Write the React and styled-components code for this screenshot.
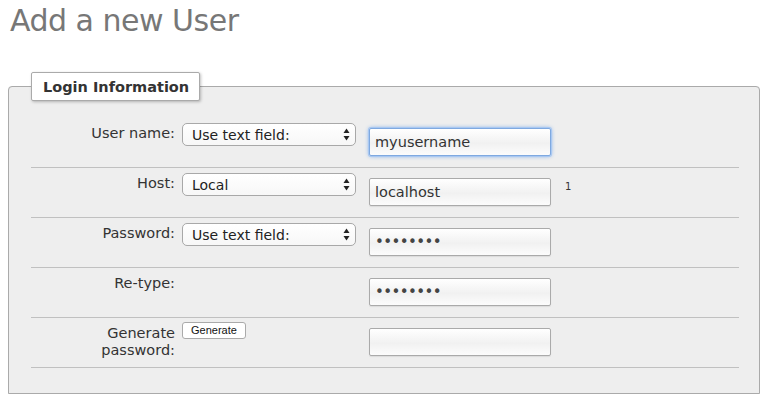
import React from "react"
import styled, { createGlobalStyle } from "styled-components"

const GlobalStyle = createGlobalStyle`
  html, body {
    margin: 0;
    padding: 0;
    background: #fff;
  }
  body {
    font-family: "DejaVu Sans", Verdana, sans-serif;
    color: #333;
  }
`

const Page = styled.div`
  padding: 3px 10px 0 8px;
`

const Title = styled.h2`
  margin: 0 0 34px 2px;
  font-size: 30px;
  font-weight: normal;
  line-height: 35px;
  letter-spacing: -0.5px;
  color: #777;
`

const Fieldset = styled.fieldset`
  margin: 0;
  padding: 17px 20px 25px 22px;
  border: 1px solid #aaa;
  border-radius: 4px 4px 0 0;
  background: #eee;
  min-width: 0;
`

const Legend = styled.legend`
  padding: 6px 10px 5px 11px;
  background: #fff;
  border: 1px solid #aaa;
  border-radius: 2px;
  box-shadow: 1px 1px 3px rgba(0, 0, 0, 0.25);
  font-size: 14.5px;
  font-weight: bold;
  line-height: 16px;
  color: #333;
`

const Row = styled.div`
  display: flex;
  align-items: flex-start;
  box-sizing: border-box;
  height: 50px;
  border-bottom: 1px solid #c0c0c0;
`

const Label = styled.label`
  flex: 0 0 144px;
  padding-top: 7px;
  text-align: right;
  font-size: 14.5px;
  line-height: 17px;
  color: #333;
`

const Cell = styled.div`
  flex: 0 0 174px;
  margin: ${(p) => p.$top || 5}px 0 0 7px;
`

const SelectWrap = styled.div`
  position: relative;
  width: 174px;
  height: 23px;
`

const Select = styled.select`
  appearance: none;
  width: 100%;
  height: 100%;
  box-sizing: border-box;
  margin: 0;
  padding: 0 20px 0 9px;
  border: 1px solid #a8a8a8;
  border-radius: 5px;
  background: linear-gradient(#fff, #f7f7f7);
  font-family: "DejaVu Sans", Verdana, sans-serif;
  font-size: 14px;
  color: #222;
  outline: none;
`

const Arrows = styled.svg`
  position: absolute;
  right: 6px;
  top: 5px;
  pointer-events: none;
`

const InputCell = styled.div`
  flex: 0 0 182px;
  margin: 10px 0 0 13px;
`

const Input = styled.input`
  display: block;
  width: 182px;
  height: 28px;
  box-sizing: border-box;
  margin: 0;
  padding: 0 5px;
  border: 1px solid ${(p) => (p.$focused ? "#7fa9e0" : "#aaa")};
  border-radius: 2px;
  background: linear-gradient(#fff 0%, #f1f1f1 55%, #fcfcfc 100%);
  box-shadow: ${(p) =>
    p.$focused
      ? "0 0 0 1px #a9c8f2, 0 0 4px #6aa0e8"
      : "0 1px 1px rgba(0, 0, 0, 0.08)"};
  font-family: "DejaVu Sans", Verdana, sans-serif;
  font-size: 14.5px;
  color: #333;
  outline: none;
  &[type="password"] {
    font-size: 15px;
    color: #444;
    letter-spacing: -0.6px;
  }
`

const Note = styled.sup`
  margin: 13px 0 0 14px;
  font-size: 10px;
  line-height: 12px;
  vertical-align: baseline;
  color: #333;
`

const Button = styled.button`
  display: block;
  height: 17px;
  padding: 0 8px;
  border: 1px solid #aaa;
  border-radius: 3px;
  background: #fff;
  font-family: "Liberation Sans", Arial, sans-serif;
  font-size: 11px;
  line-height: 15px;
  color: #111;
`

function FakeSelect({ value, options }) {
  return (
    <Cell>
      <SelectWrap>
        <Select defaultValue={value}>
          {options.map((o) => (
            <option key={o}>{o}</option>
          ))}
        </Select>
        <Arrows width="7" height="13" viewBox="0 0 7 13">
          <path d="M3.5 0.5 L6.5 5 L0.5 5 Z" fill="#222" />
          <path d="M0.5 8 L6.5 8 L3.5 12.5 Z" fill="#222" />
        </Arrows>
      </SelectWrap>
    </Cell>
  )
}

export default function App() {
  return (
    <Page>
      <GlobalStyle />
      <Title>Add a new User</Title>
      <Fieldset>
        <Legend>Login Information</Legend>
        <Row>
          <Label>User name:</Label>
          <FakeSelect
            value="Use text field:"
            options={["Any user", "Use text field:"]}
          />
          <InputCell>
            <Input type="text" defaultValue="myusername" $focused />
          </InputCell>
        </Row>
        <Row>
          <Label>Host:</Label>
          <FakeSelect
            value="Local"
            options={["Any host", "Local", "This Host", "Use text field:"]}
          />
          <InputCell>
            <Input type="text" defaultValue="localhost" />
          </InputCell>
          <Note>1</Note>
        </Row>
        <Row>
          <Label>Password:</Label>
          <FakeSelect
            value="Use text field:"
            options={["No Password", "Use text field:"]}
          />
          <InputCell>
            <Input type="password" defaultValue="password" />
          </InputCell>
        </Row>
        <Row>
          <Label>Re-type:</Label>
          <Cell />
          <InputCell>
            <Input type="password" defaultValue="password" />
          </InputCell>
        </Row>
        <Row>
          <Label>
            Generate
            <br />
            password:
          </Label>
          <Cell $top={4}>
            <Button type="button">Generate</Button>
          </Cell>
          <InputCell>
            <Input type="text" defaultValue="" />
          </InputCell>
        </Row>
      </Fieldset>
    </Page>
  )
}
